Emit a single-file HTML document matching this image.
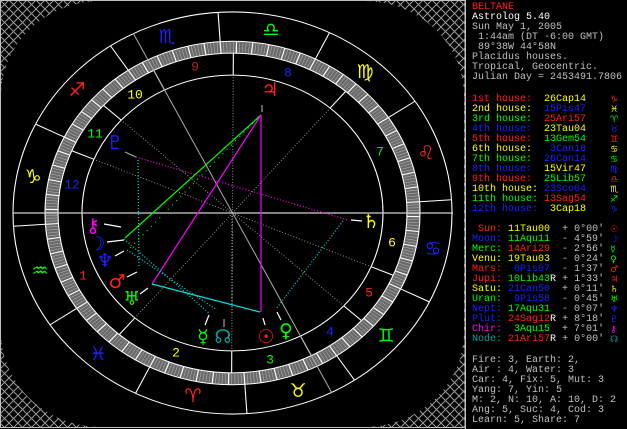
<!DOCTYPE html>
<html><head><meta charset="utf-8">
<style>
html,body{margin:0;padding:0;background:#000;}
body{width:627px;height:429px;position:relative;overflow:hidden;}
#chart{position:absolute;left:0;top:0;}
.t{position:absolute;font-family:"Liberation Mono","DejaVu Sans Mono",monospace;font-size:10px;line-height:10px;white-space:pre;color:#c0c0c0;}
.t div{height:10px;line-height:10px;overflow:visible;}
.r{color:#ff2020}.y{color:#ffff00}.g{color:#00ff00}.b{color:#2020ff}.w{color:#ffffff}.m{color:#ff00ff}.c{color:#00a0a0}
.gl{font-family:"DejaVu Sans",sans-serif;font-size:9px;display:inline-block;height:10px;line-height:10px;vertical-align:top;}
</style></head><body>
<svg id="chart" width="627" height="429" viewBox="0 0 627 429" xmlns="http://www.w3.org/2000/svg">
<defs>
<pattern id="mo" width="9" height="9" patternUnits="userSpaceOnUse">
<path d="M0 0L9 9M9 0L0 9" stroke="#9a9a9a" stroke-width="1"/>
</pattern>
</defs>
<rect x="0" y="0" width="465" height="428" fill="url(#mo)"/>
<rect x="1" y="1" width="463" height="426" rx="100" ry="95" fill="#000"/>
<rect x="0.5" y="0.5" width="464.5" height="427" fill="none" stroke="#c0c0c0"/>
<line x1="465.5" y1="0" x2="465.5" y2="429" stroke="#c0c0c0"/>
<g id="wheel" transform="translate(232.5,213) scale(1,0.916)">
<circle r="181" fill="none" stroke="#6a6a6a" stroke-width="13"/>
<circle r="219.5" fill="none" stroke="#fff" stroke-width="1.1"/>
<circle r="187.5" fill="none" stroke="#fff" stroke-width="1.1"/>
<circle r="174.5" fill="none" stroke="#fff" stroke-width="1.1"/>
<circle r="150.5" fill="none" stroke="#fff" stroke-width="1.1"/>
</g>
<line x1="13" y1="213" x2="453" y2="213" stroke="#d0d0d0" stroke-width="1.2"/>
<g fill="none" stroke-width="1.2">
<line x1="125" y1="238" x2="261" y2="115" stroke="#00ff00"/>
<line x1="130" y1="248" x2="261" y2="115" stroke="#00ff00" stroke-dasharray="1 5"/>
<line x1="261" y1="115" x2="261" y2="312" stroke="#ff00ff"/>
<line x1="261" y1="115" x2="152" y2="284" stroke="#ff00ff"/>
<line x1="152" y1="284" x2="260" y2="312" stroke="#00e0e0"/>
<line x1="136" y1="157" x2="348" y2="220" stroke="#ff00ff" stroke-dasharray="1 2"/>
<line x1="343" y1="221" x2="276" y2="309" stroke="#00e0e0" stroke-dasharray="1 2"/>
<line x1="138" y1="160" x2="139" y2="268" stroke="#00e0e0" stroke-dasharray="1 2"/>
<line x1="124" y1="239" x2="209" y2="313" stroke="#00e0e0" stroke-dasharray="1 2"/>
<line x1="127" y1="250" x2="217" y2="310" stroke="#00e0e0" stroke-dasharray="1 2"/>
<line x1="232" y1="213" x2="232" y2="313" stroke="#a0a0a0" stroke-dasharray="1 2"/>
<line x1="136" y1="157" x2="125" y2="152" stroke="#a0a0a0"/>
<line x1="121" y1="227" x2="104" y2="224" stroke="#fff"/>
<line x1="124" y1="240" x2="107" y2="242" stroke="#fff"/>
<line x1="124" y1="251" x2="115" y2="256" stroke="#fff"/>
<line x1="137" y1="272" x2="127" y2="277" stroke="#fff"/>
<line x1="148" y1="288" x2="140" y2="294" stroke="#fff"/>
<line x1="209" y1="315" x2="205" y2="325" stroke="#fff"/>
<line x1="224" y1="319" x2="224" y2="327" stroke="#a0a0a0"/>
<line x1="263" y1="318" x2="265" y2="325" stroke="#fff"/>
<line x1="277" y1="312" x2="281" y2="320" stroke="#fff"/>
<line x1="351" y1="220" x2="362" y2="221" stroke="#fff"/>
<line x1="262" y1="105" x2="262" y2="112" stroke="#a0a0a0"/>
</g>
<g font-family="DejaVu Sans, sans-serif" text-anchor="middle" dominant-baseline="central">
<g font-family="Liberation Mono, monospace" font-size="13">
<text x="83" y="276" fill="#ff2020">1</text>
<text x="176" y="353" fill="#ffff00">2</text>
<text x="270" y="360" fill="#00ff00">3</text>
<text x="330" y="332" fill="#2020ff">4</text>
<text x="369" y="293" fill="#ff2020">5</text>
<text x="392" y="243" fill="#ffff00">6</text>
<text x="380" y="152" fill="#00ff00">7</text>
<text x="288" y="73" fill="#2020ff">8</text>
<text x="195" y="67" fill="#c02020">9</text>
<text x="135" y="95" fill="#ffff00">10</text>
<text x="95" y="134" fill="#00ff00">11</text>
<text x="72" y="185" fill="#2020ff">12</text>
</g>
<g font-size="19">
<text x="167" y="37" fill="#2020ff">♏</text>
<text x="77" y="90" fill="#ff2020">♐</text>
<text x="33" y="177" fill="#ffff00">♑</text>
<text x="40" y="271" fill="#00ff00">♒</text>
<text x="98" y="354" fill="#2020ff">♓</text>
<text x="193" y="396" fill="#ff2020">♈</text>
<text x="298" y="391" fill="#ffff00">♉</text>
<text x="386" y="336" fill="#00ff00">♊</text>
<text x="433" y="249" fill="#2020ff">♋</text>
<text x="426" y="153" fill="#ff2020">♌</text>
<text x="365" y="72" fill="#ffff00">♍</text>
<text x="271" y="30" fill="#00ff00">♎</text>
</g>
<g font-size="19">
<text x="270" y="90" fill="#ff2020">♃</text>
<text x="371" y="222" fill="#ffff00">♄</text>
<text x="115" y="143" fill="#2020ff">♇</text>
<text x="93" y="226" fill="#ff00ff">⚷</text>
<text x="97" y="244" fill="#2020ff">☽</text>
<text x="105" y="261" fill="#2020ff">♆</text>
<text x="117" y="282" fill="#ff2020">♂</text>
<text x="132" y="299" fill="#00ff00">♅</text>
<text x="203" y="337" fill="#00ff00">☿</text>
<text x="223" y="337" fill="#00a0a0">☊</text>
<text x="266" y="337" fill="#ff2020">☉</text>
<text x="286" y="331" fill="#00ff00">♀</text>
</g>
</g>
</svg>
<script>
(function(){
var g=document.getElementById('wheel'),NS='http://www.w3.org/2000/svg';
function th(L){return (180+L-296.23)*Math.PI/180;}
function ln(r1,r2,L,col,w,dash){var t=th(L),c=Math.cos(t),s=-Math.sin(t);var e=document.createElementNS(NS,'line');
e.setAttribute('x1',r1*c);e.setAttribute('y1',r1*s);e.setAttribute('x2',r2*c);e.setAttribute('y2',r2*s);
e.setAttribute('stroke',col);e.setAttribute('stroke-width',w);if(dash)e.setAttribute('stroke-dasharray',dash);g.appendChild(e);}
for(var d=0;d<360;d++){if(d%5==0)ln(174.5,187.5,d,'#ffffff',1.2);else ln(175.5,186.5,d,'#c8c8c8',0.45);}
for(var k=0;k<12;k++){ln(187.5,219.5,k*30,'#ffffff',1.1);}
var cu=[296.23,345.78,25.95,53.07,73.9,93.3,116.23,165.78,205.95,233.07,253.9,273.3];
for(var i=0;i<12;i++){ln(150.5,174.5,cu[i],'#ffffff',1.1);
 if(i!=0&&i!=3&&i!=6&&i!=9)ln(0,150.5,cu[i],'#a0a0a0',1,'1 2');}
ln(-219.5,219.5,cu[9],'#b0b0b0',1);
})();
</script>
<div class="t" style="left:472px;top:3px"><div class="r">BELTANE</div><div class="w">Astrolog 5.40</div><div>Sun May 1, 2005</div><div> 1:44am (DT -6:00 GMT)</div><div> 89°38W 44°58N</div><div>Placidus houses.</div><div>Tropical, Geocentric.</div><div>Julian Day = 2453491.7806</div></div>
<div class="t" style="left:472px;top:95px"><div><span class="r">1st house:</span>  <span class="y">26Cap14</span>    <span class="r gl">♑</span></div><div><span class="y">2nd house:</span>  <span class="b">15Pis47</span>    <span class="y gl">♓</span></div><div><span class="g">3rd house:</span>  <span class="r">25Ari57</span>    <span class="g gl">♈</span></div><div><span class="b">4th house:</span>  <span class="y">23Tau04</span>    <span class="b gl">♉</span></div><div><span class="r">5th house:</span>  <span class="g">13Gem54</span>    <span class="r gl">♊</span></div><div><span class="y">6th house:</span>  <span class="b"> 3Can18</span>    <span class="y gl">♋</span></div><div><span class="g">7th house:</span>  <span class="b">26Can14</span>    <span class="g gl">♋</span></div><div><span class="b">8th house:</span>  <span class="y">15Vir47</span>    <span class="b gl">♍</span></div><div><span class="r">9th house:</span>  <span class="g">25Lib57</span>    <span class="r gl">♎</span></div><div><span class="y">10th house:</span> <span class="b">23Sco04</span>    <span class="y gl">♏</span></div><div><span class="g">11th house:</span> <span class="r">13Sag54</span>    <span class="g gl">♐</span></div><div><span class="b">12th house:</span> <span class="y"> 3Cap18</span>    <span class="b gl">♑</span></div></div>
<div class="t" style="left:472px;top:225px"><div> <span class="r">Sun:</span> <span class="y">11Tau00</span>  + 0°00' <span class="r gl">☉</span></div><div><span class="b">Moon:</span> <span class="g">11Aqu11</span>  - 4°59' <span class="b gl">☽</span></div><div><span class="g">Merc:</span> <span class="r">14Ari29</span>  - 2°56' <span class="g gl">☿</span></div><div><span class="y">Venu:</span> <span class="y">19Tau03</span>  - 0°24' <span class="g gl">♀</span></div><div><span class="r">Mars:</span> <span class="b"> 0Pis07</span>  - 1°37' <span class="r gl">♂</span></div><div><span class="r">Jupi:</span> <span class="g">10Lib43</span><span class="w">R</span> + 1°33' <span class="r gl">♃</span></div><div><span class="y">Satu:</span> <span class="b">21Can50</span>  + 0°11' <span class="y gl">♄</span></div><div><span class="g">Uran:</span> <span class="b"> 9Pis58</span>  - 0°45' <span class="g gl">♅</span></div><div><span class="b">Nept:</span> <span class="g">17Aqu31</span>  - 0°07' <span class="b gl">♆</span></div><div><span class="b">Plut:</span> <span class="r">24Sag12</span><span class="w">R</span> + 8°18' <span class="b gl">♇</span></div><div><span class="m">Chir:</span> <span class="g"> 3Aqu15</span>  + 7°01' <span class="m gl">⚷</span></div><div><span class="c">Node:</span> <span class="r">21Ari57</span><span class="w">R</span> + 0°00' <span class="c gl">☊</span></div></div>
<div class="t" style="left:472px;top:356px"><div>Fire: 3, Earth: 2,</div><div>Air : 4, Water: 3</div><div>Car: 4, Fix: 5, Mut: 3</div><div>Yang: 7, Yin: 5</div><div>M: 2, N: 10, A: 10, D: 2</div><div>Ang: 5, Suc: 4, Cod: 3</div><div>Learn: 5, Share: 7</div></div>
</body></html>
